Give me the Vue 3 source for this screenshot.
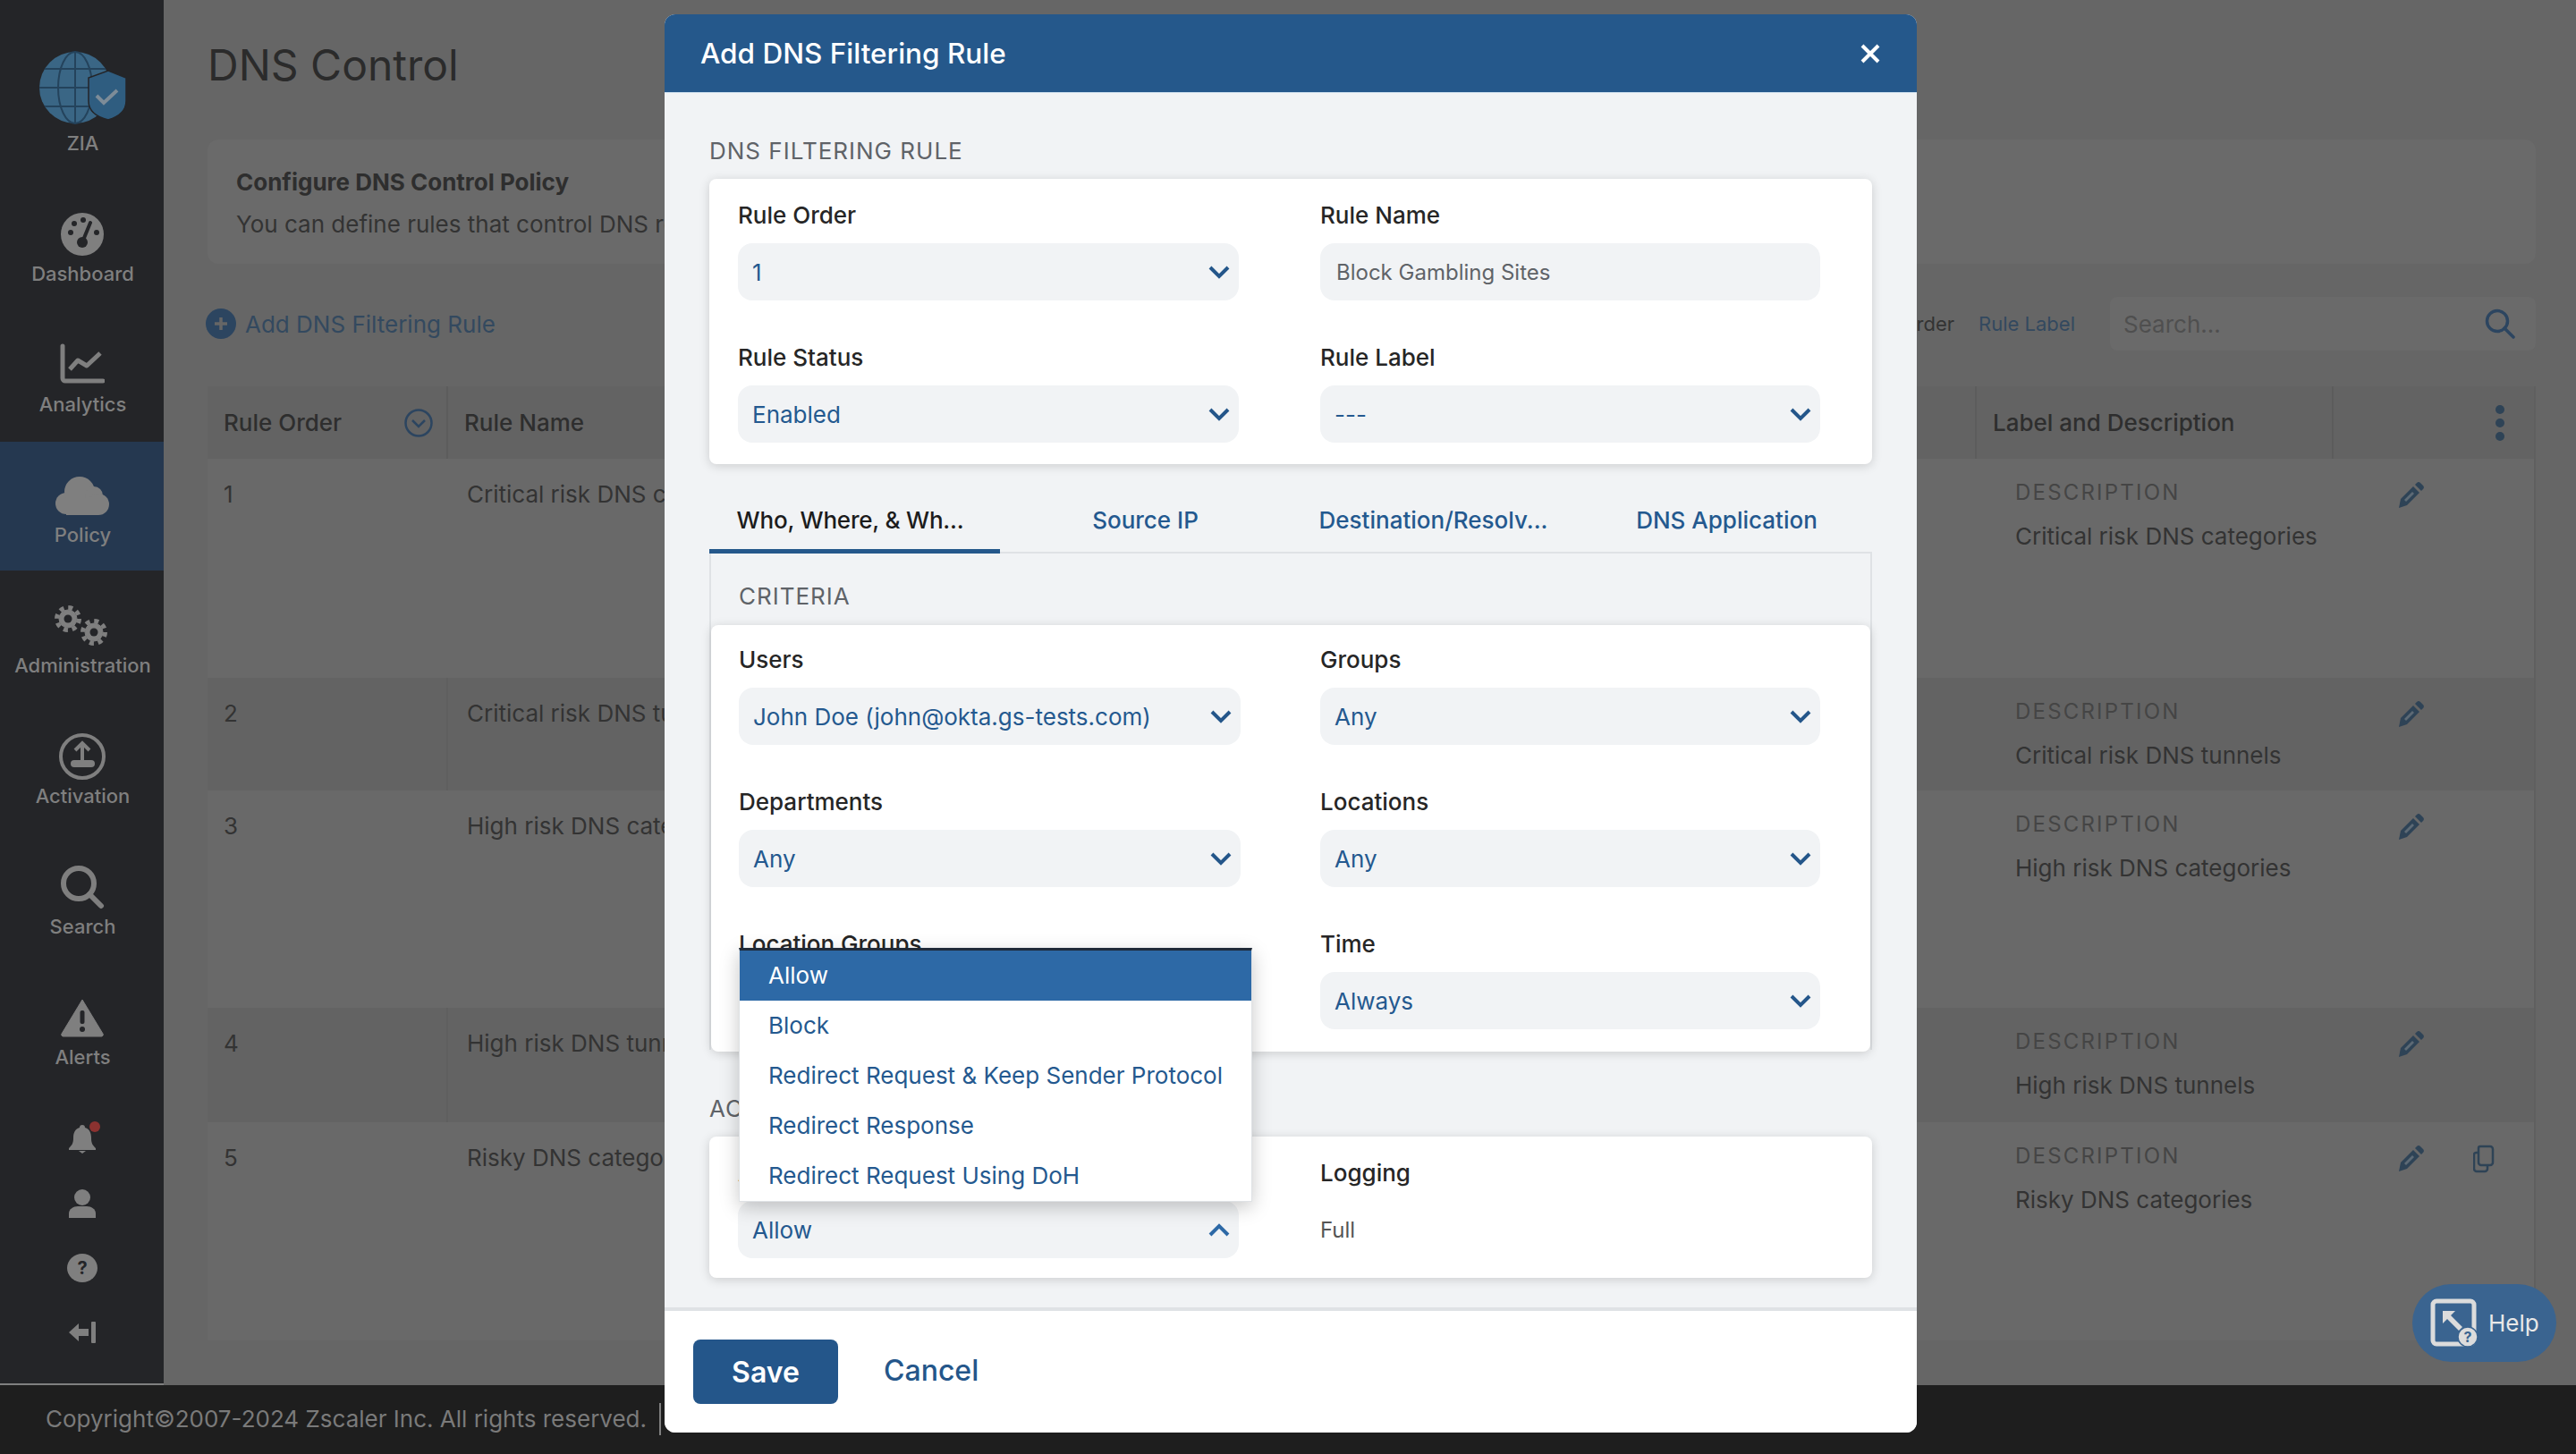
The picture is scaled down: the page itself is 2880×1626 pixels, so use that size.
<template>
  <div class="page">
    <div class="top">
      <aside class="sidebar">
        <div class="logo">
          <svg width="100" height="82" viewBox="0 0 100 82">
            <circle cx="41" cy="41" r="40" fill="#3a6685" />
            <g fill="none" stroke="#24435c" stroke-width="2">
              <ellipse cx="41" cy="41" rx="19" ry="40" />
              <line x1="41" y1="1" x2="41" y2="81" />
              <line x1="1" y1="41" x2="81" y2="41" />
              <path d="M7 20 H75 M7 62 H75" />
            </g>
            <path d="M78 22 L98 30 V56 C98 68 88 74 78 77 C66 74 56 68 56 56 V30 Z" fill="#2f5d80" stroke="#242528" stroke-width="1.5" />
            <path d="M65 50 L73 58 L88 44" fill="none" stroke="#7d8c98" stroke-width="4" />
          </svg>
          <span class="zia">ZIA</span>
        </div>
        <div class="nav-item">
          <svg class="nav-icon" width="48" height="48" viewBox="0 0 48 48">
            <circle cx="24" cy="24" r="24" fill="#7f7f7f" />
            <g fill="#242528">
              <circle cx="11" cy="22" r="3" />
              <circle cx="15" cy="12" r="3" />
              <circle cx="25" cy="8" r="3" />
              <circle cx="40" cy="22" r="3" />
              <circle cx="24" cy="33" r="6" />
            </g>
            <path d="M24 33 L33 11" stroke="#242528" stroke-width="4" stroke-linecap="round" />
          </svg>
          <span>Dashboard</span>
        </div>
        <div class="nav-item">
          <svg class="nav-icon" width="50" height="44" viewBox="0 0 50 44">
            <path d="M3 1 V37 a3 3 0 0 0 3 3 H48" fill="none" stroke="#7f7f7f" stroke-width="5" stroke-linecap="round" />
            <path d="M11 27 L20 17 L30 23 L45 9" fill="none" stroke="#7f7f7f" stroke-width="5" stroke-linejoin="round" />
          </svg>
          <span>Analytics</span>
        </div>
        <div class="nav-item active">
          <svg class="nav-icon" width="60" height="44" viewBox="0 0 60 44">
            <g fill="#7f7f7f">
              <circle cx="12" cy="31" r="12" />
              <circle cx="27" cy="18" r="17" />
              <circle cx="43" cy="22" r="10" />
              <circle cx="48" cy="32" r="12" />
              <rect x="12" y="26" width="36" height="18" />
            </g>
          </svg>
          <span>Policy</span>
        </div>
        <div class="nav-item">
          <svg class="nav-icon" width="62" height="48" viewBox="0 0 62 48">
            <g fill="#7f7f7f" stroke="#7f7f7f">
              <circle cx="15" cy="16" r="10" />
              <circle cx="15" cy="16" r="12.5" fill="none" stroke-width="5" stroke-dasharray="5 4.8" />
              <circle cx="44" cy="31" r="10" />
              <circle cx="44" cy="31" r="12.5" fill="none" stroke-width="5" stroke-dasharray="5 4.8" />
            </g>
            <circle cx="15" cy="16" r="4.5" fill="#242528" />
            <circle cx="44" cy="31" r="4.5" fill="#242528" />
          </svg>
          <span>Administration</span>
        </div>
        <div class="nav-item">
          <svg class="nav-icon" width="52" height="52" viewBox="0 0 52 52">
            <circle cx="26" cy="26" r="24" fill="none" stroke="#7f7f7f" stroke-width="4" />
            <path d="M26 30 V12 M18 19 L26 11 L34 19" fill="none" stroke="#7f7f7f" stroke-width="4" />
            <rect x="13" y="30" width="27" height="8" rx="4" fill="#7f7f7f" />
          </svg>
          <span>Activation</span>
        </div>
        <div class="nav-item">
          <svg class="nav-icon" width="50" height="50" viewBox="0 0 50 50">
            <circle cx="21" cy="21" r="17" fill="none" stroke="#7f7f7f" stroke-width="6" />
            <path d="M33 33 L46 46" stroke="#7f7f7f" stroke-width="6" stroke-linecap="round" />
          </svg>
          <span>Search</span>
        </div>
        <div class="nav-item">
          <svg class="nav-icon" width="50" height="44" viewBox="0 0 50 44">
            <path d="M25 2 L48 40 a2 2 0 0 1 -2 3 H4 a2 2 0 0 1 -2 -3 Z" fill="#7f7f7f" stroke="#7f7f7f" stroke-linejoin="round" />
            <rect x="22.5" y="14" width="5" height="15" rx="2" fill="#242528" />
            <circle cx="25" cy="35" r="3" fill="#242528" />
          </svg>
          <span>Alerts</span>
        </div>
        <div class="nav-lower">
          <div class="lower-icon bell">
            <svg width="30" height="32" viewBox="0 0 30 32">
              <path d="M15 0 a3 3 0 0 1 3 3 C24 5 25 10 25 15 C25 21 27 23 30 26 V28 H0 V26 C3 23 5 21 5 15 C5 10 6 5 12 3 a3 3 0 0 1 3 -3 Z" fill="#7f7f7f" />
              <path d="M11 29 H19 L15 32 Z" fill="#7f7f7f" />
            </svg>
            <i class="dot"></i>
          </div>
          <div class="lower-icon">
            <svg width="30" height="32" viewBox="0 0 30 32">
              <circle cx="15" cy="9" r="9" fill="#7f7f7f" />
              <path d="M0 32 V27 C0 22 5 19 10 19 H20 C25 19 30 22 30 27 V32 Z" fill="#7f7f7f" />
            </svg>
          </div>
          <div class="lower-icon">
            <svg width="34" height="32" viewBox="0 0 34 32">
              <ellipse cx="17" cy="16" rx="17" ry="16" fill="#7f7f7f" />
              <text x="17" y="23" text-anchor="middle" font-size="20" font-weight="700" font-family="Inter, sans-serif" fill="#242528">?</text>
            </svg>
          </div>
          <div class="lower-icon">
            <svg width="30" height="24" viewBox="0 0 30 24">
              <path d="M0 12 L11 2 V8 H22 V16 H11 V22 Z" fill="#7f7f7f" />
              <rect x="25" y="0" width="5" height="24" rx="1" fill="#7f7f7f" />
            </svg>
          </div>
        </div>
      </aside>

      <main class="main">
        <h1>DNS Control</h1>
        <div class="info-box">
          <strong>Configure DNS Control Policy</strong>
          <p>You can define rules that control DNS requests and responses.</p>
        </div>
        <div class="toolbar">
          <div class="add-link">
            <svg width="34" height="34" viewBox="0 0 34 34">
              <circle cx="17" cy="17" r="17" fill="#2c4560" />
              <path d="M17 10 V24 M10 17 H24" stroke="#666" stroke-width="3.5" />
            </svg>
            <span>Add DNS Filtering Rule</span>
          </div>
          <div class="toolbar-right">
            <span class="sort-by">Rule Order</span>
            <span class="sort-by link">Rule Label</span>
            <div class="search-box">
              <span>Search...</span>
              <svg width="34" height="34" viewBox="0 0 34 34">
                <circle cx="14" cy="14" r="11.5" fill="none" stroke="#2c4560" stroke-width="3.5" />
                <path d="M22 22 L32 32" stroke="#2c4560" stroke-width="3.5" stroke-linecap="round" />
              </svg>
            </div>
          </div>
        </div>

        <div class="table">
          <div class="thead">
            <div class="th order-col">
              <span>Rule Order</span>
              <svg width="32" height="32" viewBox="0 0 32 32">
                <circle cx="16" cy="16" r="14.5" fill="none" stroke="#2c4560" stroke-width="2.5" />
                <path d="M9 13 L16 20 L23 13" fill="none" stroke="#2c4560" stroke-width="2.5" />
              </svg>
            </div>
            <div class="th name-col">Rule Name</div>
            <div class="th desc-col">Label and Description</div>
            <div class="th menu-col">
              <i></i><i></i><i></i>
            </div>
          </div>
          <div
            v-for="(rule, i) in rules"
            :key="rule.order"
            class="tr"
            :class="{ even: i % 2 === 1 }"
            :style="{ height: rule.height + 'px' }"
          >
            <div class="td order-cell">{{ rule.order }}</div>
            <div class="td name-cell">{{ rule.name }}</div>
            <div class="td desc-cell">
              <div class="desc-title">DESCRIPTION</div>
              <div class="desc-text">{{ rule.name }}</div>
            </div>
            <div class="td action-cell">
              <svg width="28" height="30" viewBox="0 0 28 30">
                <path d="M20 2 a3 3 0 0 1 4 0 l3 3 a3 3 0 0 1 0 4 l-2 2 l-7 -7 Z" fill="#2e4356" />
                <path d="M16 6 L23 13 L9 27 L0 30 L2 20 Z" fill="#2e4356" />
                <path d="M15 12 L6 21 L8 23 L17 14 Z" fill="#5d6a75" />
              </svg>
              <svg v-if="i === 4" class="copy-icon" width="24" height="32" viewBox="0 0 24 32">
                <path d="M8 2 H19 a3 3 0 0 1 3 3 V20 a3 3 0 0 1 -3 3 H9 a3 3 0 0 1 -3 -3 V4 a2 2 0 0 1 2 -2 Z" fill="none" stroke="#2e4356" stroke-width="2.5" />
                <path d="M6 9 H4 a2.5 2.5 0 0 0 -3 3 V27 a3 3 0 0 0 3 3 H13 a3 3 0 0 0 3 -3 V23" fill="none" stroke="#2e4356" stroke-width="2.5" />
              </svg>
            </div>
          </div>
        </div>
      </main>
    </div>

    <footer class="footer">
      <span>Copyright©2007-2024 Zscaler Inc. All rights reserved.</span>
      <i class="footer-bar"></i>
    </footer>

    <div class="help">
      <svg width="62" height="56" viewBox="0 0 62 56">
        <rect x="3" y="3" width="46" height="48" rx="4" fill="none" stroke="#dcdcdc" stroke-width="5" />
        <path d="M14 14 H28 L23 19 L36 32 L32 36 L19 23 L14 28 Z" fill="#dcdcdc" />
        <circle cx="42" cy="43" r="11" fill="#dcdcdc" stroke="#3a6490" stroke-width="1.5" />
        <text x="42" y="49" text-anchor="middle" font-size="16" font-weight="700" font-family="Inter, sans-serif" fill="#3a6490">?</text>
      </svg>
      <span>Help</span>
    </div>

    <section class="modal">
      <header class="modal-head">
        <span>Add DNS Filtering Rule</span>
        <svg width="22" height="22" viewBox="0 0 22 22">
          <path d="M2 2 L20 20 M20 2 L2 20" stroke="#fff" stroke-width="4" />
        </svg>
      </header>

      <div class="modal-body">
        <div class="section-title">DNS FILTERING RULE</div>
        <div class="card form-grid">
          <div v-for="f in ruleFields" :key="f.label" class="field">
            <label>{{ f.label }}</label>
            <div class="select" :class="{ input: f.input }">
              <span>{{ f.value }}</span>
              <svg v-if="!f.input" width="24" height="15" viewBox="0 0 24 15">
                <path d="M2 2 L12 12 L22 2" fill="none" stroke="#24568a" stroke-width="4" />
              </svg>
            </div>
          </div>
        </div>

        <div class="tabs">
          <div
            v-for="(tab, i) in tabs"
            :key="tab"
            class="tab"
            :class="{ selected: i === 0 }"
          >{{ tab }}</div>
        </div>

        <div class="criteria">
          <div class="section-title inner">CRITERIA</div>
          <div class="card form-grid criteria-grid">
            <div v-for="f in criteriaFields" :key="f.label" class="field">
              <label>{{ f.label }}</label>
              <div class="select">
                <span>{{ f.value }}</span>
                <svg width="24" height="15" viewBox="0 0 24 15">
                  <path d="M2 2 L12 12 L22 2" fill="none" stroke="#24568a" stroke-width="4" />
                </svg>
              </div>
            </div>
          </div>
        </div>

        <div class="section-title action-title">ACTION</div>
        <div class="card form-grid action-card">
          <div class="field">
            <label>Action</label>
            <div class="select">
              <span>Allow</span>
              <svg width="24" height="15" viewBox="0 0 24 15">
                <path d="M2 13 L12 3 L22 13" fill="none" stroke="#2d69a6" stroke-width="4" />
              </svg>
            </div>
          </div>
          <div class="field">
            <label>Logging</label>
            <div class="plain">Full</div>
          </div>
        </div>
      </div>

      <footer class="modal-foot">
        <button class="save">Save</button>
        <span class="cancel">Cancel</span>
      </footer>

      <ul class="dropdown">
        <li
          v-for="(opt, i) in actions"
          :key="opt"
          :class="{ current: i === 0 }"
        >{{ opt }}</li>
      </ul>
    </section>
  </div>
</template>

<script setup>
const rules = [
  { order: 1, name: "Critical risk DNS categories", height: 245 },
  { order: 2, name: "Critical risk DNS tunnels", height: 126 },
  { order: 3, name: "High risk DNS categories", height: 243 },
  { order: 4, name: "High risk DNS tunnels", height: 128 },
  { order: 5, name: "Risky DNS categories", height: 244 },
];

const ruleFields = [
  { label: "Rule Order", value: "1" },
  { label: "Rule Name", value: "Block Gambling Sites", input: true },
  { label: "Rule Status", value: "Enabled" },
  { label: "Rule Label", value: "---" },
];

const tabs = ["Who, Where, & Wh...", "Source IP", "Destination/Resolv...", "DNS Application"];

const criteriaFields = [
  { label: "Users", value: "John Doe (john@okta.gs-tests.com)" },
  { label: "Groups", value: "Any" },
  { label: "Departments", value: "Any" },
  { label: "Locations", value: "Any" },
  { label: "Location Groups", value: "Any" },
  { label: "Time", value: "Always" },
];

const actions = [
  "Allow",
  "Block",
  "Redirect Request & Keep Sender Protocol",
  "Redirect Response",
  "Redirect Request Using DoH",
];
</script>

<style scoped>
.page {
  position: relative;
  display: flex;
  flex-direction: column;
  width: 2880px;
  height: 1626px;
  overflow: hidden;
  background: #666;
  font-family: Inter, "Liberation Sans", sans-serif;
  font-size: 26px;
  color: #2e2e2e;
}

.top {
  display: flex;
  flex: 1;
  min-height: 0;
}

/* sidebar */
.sidebar {
  width: 183px;
  flex-shrink: 0;
  background: #242528;
  border-bottom: 2px solid #808080;
  color: #7f7f7f;
  font-size: 22px;
  font-weight: 500;
}

.logo {
  height: 202px;
  padding-top: 57px;
  box-sizing: border-box;
  display: flex;
  flex-direction: column;
  align-items: center;
}

.logo svg {
  margin-left: 2px;
}

.zia {
  line-height: 36px;
  margin-top: 3px;
  padding-left: 2px;
}

.nav-item {
  height: 144px;
  margin-bottom: 2px;
  padding-top: 32px;
  box-sizing: border-box;
  display: flex;
  flex-direction: column;
  align-items: center;
  line-height: 32px;
}

.nav-item span {
  padding-left: 2px;
}

.nav-item.active {
  background: #253850;
}

.nav-icon {
  height: 56px;
  display: block;
}

.nav-lower {
  display: flex;
  flex-direction: column;
  align-items: center;
  gap: 32px;
  padding-top: 30px;
}

.lower-icon {
  position: relative;
  height: 40px;
  display: flex;
  align-items: center;
  justify-content: center;
}

.dot {
  position: absolute;
  top: 0;
  right: -5px;
  width: 12px;
  height: 12px;
  border-radius: 50%;
  background: #8b3230;
}

/* main */
.main {
  flex: 1;
  min-width: 0;
  padding: 42px 45px 0 49px;
}

h1 {
  margin: 0;
  font-size: 48px;
  line-height: 62px;
  font-weight: 400;
  color: #2b2b2b;
}

.info-box {
  height: 139px;
  margin-top: 52px;
  padding: 31px 32px 0;
  box-sizing: border-box;
  background: #6a6a6a;
  border-radius: 12px;
  line-height: 34px;
}

.info-box strong {
  font-weight: 700;
}

.info-box p {
  width: 479px;
  margin: 13px 0 0;
  white-space: nowrap;
  overflow: hidden;
  color: #333;
}

.toolbar {
  display: flex;
  justify-content: space-between;
  align-items: center;
  height: 60px;
  margin-top: 37px;
}

.add-link {
  display: flex;
  align-items: center;
  gap: 10px;
  margin-left: -2px;
  color: #33495f;
}

.toolbar-right {
  display: flex;
  align-items: center;
}

.sort-by {
  font-size: 22px;
  color: #333;
  margin-right: 27px;
}

.sort-by.link {
  color: #33495f;
  margin-right: 39px;
}

.search-box {
  width: 476px;
  height: 60px;
  padding: 0 23px 0 15px;
  box-sizing: border-box;
  display: flex;
  align-items: center;
  justify-content: space-between;
  background: #6a6a6a;
  border-radius: 8px;
  color: #4f4f4f;
}

/* table */
.table {
  margin-top: 40px;
  border-right: 2px solid #5f5f5f;
}

.thead,
.tr {
  display: grid;
  grid-template-columns: 269px 1fr 399px 224px;
}

.thead {
  height: 81px;
  background: #636363;
  font-weight: 500;
}

.th {
  display: flex;
  align-items: center;
  border-right: 2px solid #5c5c5c;
  color: #2e2e2e;
}

.order-col {
  justify-content: space-between;
  padding: 0 15px 0 18px;
}

.name-col {
  padding-left: 18px;
}

.desc-col {
  padding-left: 18px;
}

.menu-col {
  flex-direction: column;
  align-items: flex-end;
  justify-content: center;
  gap: 5px;
  padding-right: 33px;
  border-right: 0;
}

.menu-col i {
  width: 10px;
  height: 10px;
  border-radius: 50%;
  background: #2e4356;
}

.tr {
  background: #696969;
  color: #333;
}

.tr.even {
  background: #636363;
}

.td {
  line-height: 34px;
  white-space: nowrap;
}

.order-cell {
  padding: 23px 0 0 18px;
}

.tr.even .order-cell {
  border-right: 2px solid #5f5f5f;
}

.name-cell {
  padding: 23px 0 0 21px;
}

.desc-cell {
  padding: 23px 0 0 43px;
}

.desc-title {
  font-size: 24px;
  line-height: 30px;
  letter-spacing: 2.2px;
  color: #454545;
}

.desc-text {
  margin-top: 17px;
}

.action-cell {
  display: flex;
  align-items: flex-start;
  padding: 25px 0 0 73px;
}

.copy-icon {
  margin-left: 55px;
}

/* footer */
.footer {
  height: 77px;
  flex-shrink: 0;
  display: flex;
  align-items: center;
  padding: 0 0 2px 51px;
  box-sizing: border-box;
  background: #1e1e1e;
  color: #7a7a7a;
}

.footer-bar {
  width: 2px;
  height: 36px;
  margin-left: 14px;
  background: #808080;
}

.help {
  position: absolute;
  left: 2697px;
  top: 1436px;
  width: 161px;
  height: 87px;
  padding-left: 20px;
  box-sizing: border-box;
  display: flex;
  align-items: center;
  gap: 3px;
  border-radius: 44px;
  background: #3a6490;
  color: #e8e8e8;
}

/* modal */
.modal {
  position: absolute;
  left: 743px;
  top: 16px;
  width: 1400px;
  height: 1586px;
  display: flex;
  flex-direction: column;
  background: #fff;
  border-radius: 12px;
  overflow: hidden;
}

.modal-head {
  height: 88px;
  flex-shrink: 0;
  padding: 0 41px 0 40px;
  box-sizing: border-box;
  display: flex;
  align-items: center;
  justify-content: space-between;
  background: #25588b;
  border-bottom: 1px solid #cfe0ef;
  color: #fff;
  font-size: 31.5px;
  font-weight: 500;
}

.modal-body {
  flex: 1;
  padding: 48px 50px 0;
  background: #f1f3f5;
}

.section-title {
  line-height: 34px;
  margin-bottom: 14px;
  letter-spacing: 1px;
  color: #5f6368;
}

.section-title.inner {
  padding-left: 31px;
  margin-bottom: 15px;
}

.action-title {
  margin-top: 49px;
}

.card {
  background: #fff;
  border-radius: 8px;
  box-shadow: 0 2px 12px rgba(0, 0, 0, 0.16);
}

.form-grid {
  display: grid;
  grid-template-columns: 560px 559px;
  column-gap: 91px;
  row-gap: 47px;
  padding: 24px 32px;
}

.criteria-grid {
  grid-template-columns: 561px 559px;
  column-gap: 89px;
  padding: 22px 31px 25px;
}

.action-card {
  padding-bottom: 22px;
}

label {
  display: block;
  font-weight: 500;
  line-height: 34px;
  margin-bottom: 14px;
  color: #262626;
}

.select {
  height: 64px;
  padding: 0 10px 0 16px;
  box-sizing: border-box;
  display: flex;
  align-items: center;
  justify-content: space-between;
  background: #f1f3f5;
  border-radius: 16px;
  color: #24598f;
}

.select.input {
  padding-left: 18px;
  font-size: 24px;
  color: #5f6368;
}

.plain {
  height: 64px;
  display: flex;
  align-items: center;
  font-size: 24px;
  color: #555;
}

.tabs {
  display: grid;
  grid-template-columns: repeat(4, 325px);
  margin-top: 30px;
}

.tab {
  position: relative;
  height: 70px;
  padding-top: 16px;
  box-sizing: border-box;
  line-height: 34px;
  text-align: center;
  font-weight: 500;
  color: #24598f;
  border-bottom: 5px solid transparent;
  z-index: 1;
}

.tab:nth-child(3) {
  padding-right: 6px;
}

.tab.selected {
  padding-right: 10px;
  letter-spacing: -0.2px;
  color: #1c1c1c;
  border-bottom-color: #25588b;
}

.criteria {
  margin-top: -2px;
  padding-top: 31px;
  border: 2px solid #dfe2e5;
  border-bottom: 0;
  height: 557px;
  box-sizing: border-box;
}

.modal-foot {
  height: 140px;
  flex-shrink: 0;
  padding-left: 32px;
  box-sizing: border-box;
  display: flex;
  align-items: center;
  gap: 51px;
  background: #fff;
  border-top: 4px solid #dfe2e5;
}

.save {
  width: 162px;
  height: 72px;
  border: 0;
  border-radius: 8px;
  background: #24568a;
  color: #fff;
  font: 600 32px Inter, "Liberation Sans", sans-serif;
}

.cancel {
  margin-top: -4px;
  font-size: 32px;
  font-weight: 500;
  color: #24568a;
}

.dropdown {
  position: absolute;
  left: 83px;
  top: 1044px;
  width: 574px;
  margin: 0;
  padding: 0;
  list-style: none;
  background: #fff;
  border: 1px solid #dfe2e5;
  border-top: 3px solid #1f2a38;
  box-sizing: border-box;
  box-shadow: 0 6px 20px rgba(0, 0, 0, 0.22);
}

.dropdown li {
  height: 56px;
  padding-left: 32px;
  line-height: 56px;
  color: #24598f;
}

.dropdown li.current {
  background: #2d69a6;
  color: #fff;
}
</style>
